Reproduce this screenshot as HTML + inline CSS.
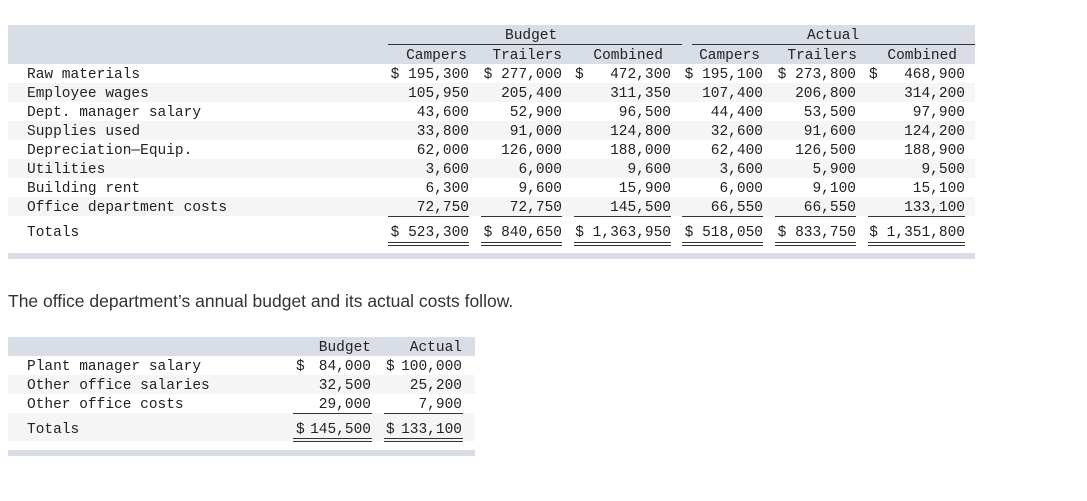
<!DOCTYPE html>
<html><head><meta charset="utf-8"><style>
body{margin:0;width:1087px;height:501px;background:#fff;position:relative;overflow:hidden;font-family:"Liberation Mono",monospace;font-size:14.5px;color:#222}
.a{position:absolute;white-space:pre;line-height:19px;height:19px;margin-top:2px}
.r{position:absolute;text-align:right;white-space:pre;line-height:19px;margin-top:2px}
.bg{position:absolute}
.l{position:absolute;height:1px;background:#333}
p{position:absolute;margin:0;font-family:"Liberation Sans",Arial,sans-serif;font-size:17.5px;color:#333;left:8px;top:291px;white-space:nowrap}
</style></head><body>
<div class="bg" style="left:8px;top:25px;width:967px;height:39px;background:#d9dde6"></div>
<div class="bg" style="left:8px;top:83px;width:967px;height:19px;background:#f5f5f5"></div>
<div class="bg" style="left:8px;top:121px;width:967px;height:19px;background:#f5f5f5"></div>
<div class="bg" style="left:8px;top:159px;width:967px;height:19px;background:#f5f5f5"></div>
<div class="bg" style="left:8px;top:197px;width:967px;height:19px;background:#f5f5f5"></div>
<div class="bg" style="left:8px;top:253px;width:967px;height:6px;background:#d9dde6"></div>
<div class="l" style="left:388px;top:44px;width:294px"></div>
<div class="l" style="left:692px;top:44px;width:283px"></div>
<div class="a" style="left:505px;top:25px">Budget</div>
<div class="a" style="left:807px;top:25px">Actual</div>
<div class="r" style="right:620px;top:45px">Campers</div>
<div class="r" style="right:525px;top:45px">Trailers</div>
<div class="r" style="right:424px;top:45px">Combined</div>
<div class="r" style="right:327px;top:45px">Campers</div>
<div class="r" style="right:230px;top:45px">Trailers</div>
<div class="r" style="right:130px;top:45px">Combined</div>
<div class="a" style="left:27px;top:64px">Raw materials</div>
<div class="a" style="left:27px;top:83px">Employee wages</div>
<div class="a" style="left:27px;top:102px">Dept. manager salary</div>
<div class="a" style="left:27px;top:121px">Supplies used</div>
<div class="a" style="left:27px;top:140px">Depreciation—Equip.</div>
<div class="a" style="left:27px;top:159px">Utilities</div>
<div class="a" style="left:27px;top:178px">Building rent</div>
<div class="a" style="left:27px;top:197px">Office department costs</div>
<div class="a" style="left:27px;top:222px">Totals</div>
<div class="r" style="right:618px;top:64px">$ 195,300
105,950
43,600
33,800
62,000
3,600
6,300
72,750</div>
<div class="r" style="right:525px;top:64px">$ 277,000
205,400
52,900
91,000
126,000
6,000
9,600
72,750</div>
<div class="a" style="left:575px;top:64px">$</div>
<div class="r" style="right:416px;top:64px">472,300
311,350
96,500
124,800
188,000
9,600
15,900
145,500</div>
<div class="r" style="right:324px;top:64px">$ 195,100
107,400
44,400
32,600
62,400
3,600
6,000
66,550</div>
<div class="r" style="right:231px;top:64px">$ 273,800
206,800
53,500
91,600
126,500
5,900
9,100
66,550</div>
<div class="a" style="left:869px;top:64px">$</div>
<div class="r" style="right:122px;top:64px">468,900
314,200
97,900
124,200
188,900
9,500
15,100
133,100</div>
<div class="r" style="right:618px;top:222px">$ 523,300</div>
<div class="r" style="right:525px;top:222px">$ 840,650</div>
<div class="r" style="right:416px;top:222px">$ 1,363,950</div>
<div class="r" style="right:324px;top:222px">$ 518,050</div>
<div class="r" style="right:231px;top:222px">$ 833,750</div>
<div class="r" style="right:122px;top:222px">$ 1,351,800</div>
<div class="l" style="left:388px;top:216px;width:81px"></div>
<div class="l" style="left:481px;top:216px;width:81px"></div>
<div class="l" style="left:574px;top:216px;width:97px"></div>
<div class="l" style="left:682px;top:216px;width:81px"></div>
<div class="l" style="left:775px;top:216px;width:81px"></div>
<div class="l" style="left:868px;top:216px;width:97px"></div>
<div class="l" style="left:388px;top:242px;width:81px"></div>
<div class="l" style="left:481px;top:242px;width:81px"></div>
<div class="l" style="left:574px;top:242px;width:97px"></div>
<div class="l" style="left:682px;top:242px;width:81px"></div>
<div class="l" style="left:775px;top:242px;width:81px"></div>
<div class="l" style="left:868px;top:242px;width:97px"></div>
<div class="l" style="left:388px;top:245px;width:81px"></div>
<div class="l" style="left:481px;top:245px;width:81px"></div>
<div class="l" style="left:574px;top:245px;width:97px"></div>
<div class="l" style="left:682px;top:245px;width:81px"></div>
<div class="l" style="left:775px;top:245px;width:81px"></div>
<div class="l" style="left:868px;top:245px;width:97px"></div>

<p>The office department’s annual budget and its actual costs follow.</p>

<div class="bg" style="left:8px;top:337px;width:467px;height:19px;background:#d9dde6"></div>
<div class="bg" style="left:8px;top:375px;width:467px;height:19px;background:#f5f5f5"></div>
<div class="bg" style="left:8px;top:413px;width:467px;height:28px;background:#f5f5f5"></div>
<div class="bg" style="left:8px;top:450px;width:467px;height:6px;background:#d9dde6"></div>
<div class="r" style="right:716px;top:337px">Budget</div>
<div class="r" style="right:625px;top:337px">Actual</div>
<div class="a" style="left:27px;top:356px">Plant manager salary</div>
<div class="a" style="left:27px;top:375px">Other office salaries</div>
<div class="a" style="left:27px;top:394px">Other office costs</div>
<div class="a" style="left:27px;top:419px">Totals</div>
<div class="a" style="left:296px;top:356px">$</div>
<div class="r" style="right:716px;top:356px">84,000
32,500
29,000</div>
<div class="a" style="left:386px;top:356px">$</div>
<div class="r" style="right:625px;top:356px">100,000
25,200
7,900</div>
<div class="a" style="left:296px;top:419px">$</div>
<div class="r" style="right:716px;top:419px">145,500</div>
<div class="a" style="left:386px;top:419px">$</div>
<div class="r" style="right:625px;top:419px">133,100</div>
<div class="l" style="left:293px;top:413px;width:79px"></div>
<div class="l" style="left:384px;top:413px;width:79px"></div>
<div class="l" style="left:293px;top:438px;width:79px"></div>
<div class="l" style="left:384px;top:438px;width:79px"></div>
<div class="l" style="left:293px;top:441px;width:79px"></div>
<div class="l" style="left:384px;top:441px;width:79px"></div>
</body></html>
